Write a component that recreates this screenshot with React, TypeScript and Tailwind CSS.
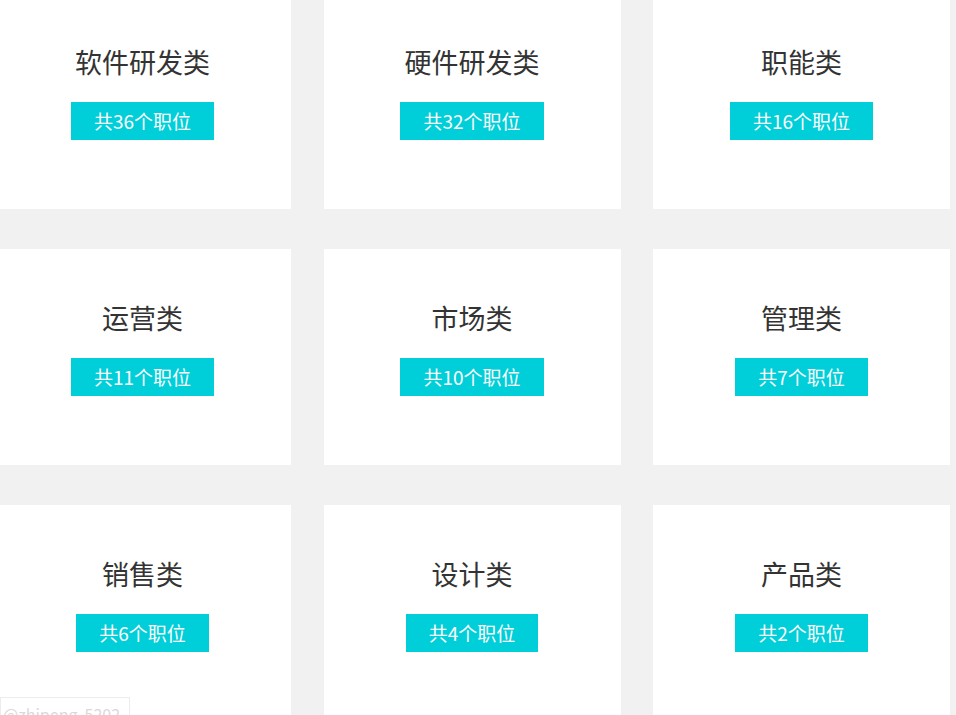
const categories = [
  { name: "软件研发类", count: 36 },
  { name: "硬件研发类", count: 32 },
  { name: "职能类", count: 16 },
  { name: "运营类", count: 11 },
  { name: "市场类", count: 10 },
  { name: "管理类", count: 7 },
  { name: "销售类", count: 6 },
  { name: "设计类", count: 4 },
  { name: "产品类", count: 2 },
];

const CategoryCard = ({ name, count }: { name: string; count: number }) => {
  return (
    <div className="h-[216px] bg-white flex flex-col items-center pt-[49px]">
      <h3 className="h-[40px] leading-[40px] text-[27px] text-[#333333] font-normal">{name}</h3>
      <span className="mt-[20px] h-[38px] leading-[38px] px-[23px] bg-[#00cfd9] text-white text-[19px]">
        共{count}个职位
      </span>
    </div>
  );
};

export default function App() {
  return (
    <div
      className="relative w-[956px] h-[715px] overflow-hidden bg-[#f1f1f1]"
      style={{ fontFamily: '"Noto Sans CJK SC", "Noto Sans", sans-serif' }}
    >
      <div className="-mt-[7px] -ml-[6px] grid grid-cols-[297px_297px_297px] gap-x-[32.5px] gap-y-[40px]">
        {categories.map((c) => (
          <CategoryCard key={c.name} name={c.name} count={c.count} />
        ))}
      </div>
      {/* faint watermark box at the bottom left */}
      <div className="absolute left-0 top-[697px] w-[130px] h-[30px] border border-[#ececec] bg-white/80 pl-[2px] pt-[6px] text-[16px] leading-[20px] text-[#d9d9d9] whitespace-nowrap">
        @zhipeng&nbsp;&nbsp;5202
      </div>
    </div>
  );
}
